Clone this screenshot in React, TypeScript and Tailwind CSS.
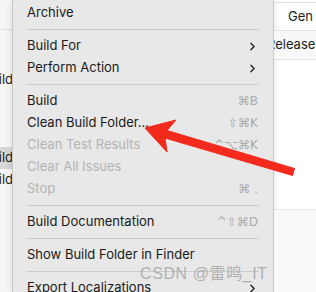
import { ChevronRight } from "lucide-react";

type Item =
    | { kind: "sep" }
    | { kind: "item"; label: string; shortcut?: string; sub?: boolean; disabled?: boolean };

const menu: Item[] = [
    { kind: "item", label: "Archive" },
    { kind: "sep" },
    { kind: "item", label: "Build For", sub: true },
    { kind: "item", label: "Perform Action", sub: true },
    { kind: "sep" },
    { kind: "item", label: "Build", shortcut: "⌘B" },
    { kind: "item", label: "Clean Build Folder...", shortcut: "⇧⌘K" },
    { kind: "item", label: "Clean Test Results", shortcut: "^⌥⌘K", disabled: true },
    { kind: "item", label: "Clear All Issues", disabled: true },
    { kind: "item", label: "Stop", shortcut: "⌘ .", disabled: true },
    { kind: "sep" },
    { kind: "item", label: "Build Documentation", shortcut: "^⇧⌘D" },
    { kind: "sep" },
    { kind: "item", label: "Show Build Folder in Finder" },
    { kind: "sep" },
    { kind: "item", label: "Export Localizations", sub: true },
];

const font = { fontFamily: "Inter, 'Liberation Sans', sans-serif" };

const MenuRow = ({ item }: { item: Item }) => {
    if (item.kind === "sep") {
        return (
            <div className="flex h-[11px] items-center px-[14px]">
                <div className="h-px w-full bg-[#cbcbcb]" />
            </div>
        );
    }
    return (
        <div className="flex h-[22px] items-center justify-between pl-[14px] pr-[15px]">
            <span className={`text-[13px] ${item.disabled ? "text-[#b4b4b4]" : "text-[#1a1a1a]"}`}>
                {item.label}
            </span>
            {item.shortcut && (
                <span className="font-['DejaVu_Sans',sans-serif] text-[12px] text-[#a9a9a9]">{item.shortcut}</span>
            )}
            {item.sub && <ChevronRight size={13} strokeWidth={2.6} className="-mr-[1px] text-[#262626]" />}
        </div>
    );
};

export default function App() {
    return (
        <div className="relative flex h-[292px] w-[316px] overflow-hidden bg-white" style={font}>
            {/* table behind, left */}
            <div className="flex w-[12px] shrink-0 flex-col bg-[#f6f6f6] text-[13px] text-[#1d1d1d]">
                <div className="h-[30px] border-b border-[#dcdcdc]" />
                <div className="mt-[39px] flex h-[22px] items-center justify-end overflow-hidden">
                    <span className="-mr-[1px]">Build</span>
                </div>
                <div className="mt-[56px] flex h-[22px] items-center justify-end overflow-hidden bg-[#d7d7d7]">
                    <span className="-mr-[1px]">Build</span>
                </div>
                <div className="flex h-[22px] items-center justify-end overflow-hidden">
                    <span className="-mr-[1px]">Build</span>
                </div>
            </div>

            {/* menu */}
            <div className="w-[262px] shrink-0 border-x border-[#c9c9c9] bg-[#e8e8e8] pt-[2px] shadow-[0_0_8px_rgba(0,0,0,0.12)]">
                {menu.map((item, i) => (
                    <MenuRow key={i} item={item} />
                ))}
            </div>

            {/* table behind, right */}
            <div className="flex min-w-0 flex-1 flex-col overflow-hidden text-[13px] text-[#1d1d1d]">
                <div className="h-[3px] border-b border-[#e2e2e2]" />
                <div className="flex h-[28px] items-center justify-end border-b border-[#e2e2e2] pr-[3px]">Gen</div>
                <div className="flex h-[29px] items-center overflow-hidden whitespace-nowrap border-b border-[#e2e2e2] bg-[#f8f8f8]">
                    <span className="-ml-[7px]">Release</span>
                </div>
                <div className="h-[150px] border-b border-[#e6e6e6]" />
                <div className="flex-1 bg-[#fafafa]" />
            </div>

            {/* red arrow */}
            <svg className="pointer-events-none absolute inset-0" width={316} height={292} viewBox="0 0 316 292">
                <polygon
                    points="145,128 176,120 167,130.5 294.5,168.5 292.5,175.5 165,138 167,152"
                    fill="#f42a1c"
                    stroke="#f42a1c"
                    strokeWidth={1}
                    strokeLinejoin="round"
                />
            </svg>

            {/* watermark */}
            <div className="pointer-events-none absolute left-[140px] top-[262px] text-[16px] tracking-[0.6px] text-[#a0a0a0]/80 font-['Liberation_Sans','Noto_Sans_CJK_SC',sans-serif]">
                CSDN @雷鸣_IT
            </div>
        </div>
    );
}
